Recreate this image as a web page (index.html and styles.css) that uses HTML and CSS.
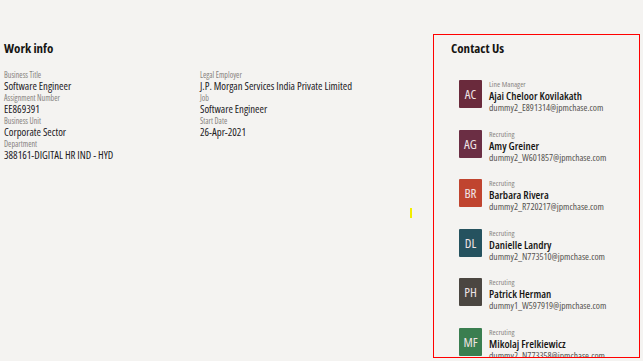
FILE: index.html
```html
<!DOCTYPE html>
<html lang="en">
<head>
<meta charset="utf-8">
<title>Work info</title>
<link rel="stylesheet" href="styles.css">
</head>
<body>
<main class="page">
  <section class="work">
    <h2 class="heading">Work info</h2>
    <div class="fields">
      <div class="col">
        <div class="field"><div class="label">Business Title</div><div class="value">Software Engineer</div></div>
        <div class="field"><div class="label">Assignment Number</div><div class="value">EE869391</div></div>
        <div class="field"><div class="label">Business Unit</div><div class="value">Corporate Sector</div></div>
        <div class="field"><div class="label">Department</div><div class="value">388161-DIGITAL HR IND - HYD</div></div>
      </div>
      <div class="col">
        <div class="field"><div class="label">Legal Employer</div><div class="value">J.P. Morgan Services India Private Limited</div></div>
        <div class="field"><div class="label">Job</div><div class="value">Software Engineer</div></div>
        <div class="field"><div class="label">Start Date</div><div class="value">26-Apr-2021</div></div>
      </div>
    </div>
  </section>
  <aside class="contact">
    <h2 class="heading">Contact Us</h2>
    <ul class="people">
      <li class="person"><span class="avatar av-ac">AC</span><div class="info"><div class="role">Line Manager</div><div class="name">Ajai Cheloor Kovilakath</div><div class="email">dummy2_E891314@jpmchase.com</div></div></li>
      <li class="person"><span class="avatar av-ag">AG</span><div class="info"><div class="role">Recruting</div><div class="name">Amy Greiner</div><div class="email">dummy2_W601857@jpmchase.com</div></div></li>
      <li class="person"><span class="avatar av-br">BR</span><div class="info"><div class="role">Recruting</div><div class="name">Barbara Rivera</div><div class="email">dummy2_R720217@jpmchase.com</div></div></li>
      <li class="person"><span class="avatar av-dl">DL</span><div class="info"><div class="role">Recruting</div><div class="name">Danielle Landry</div><div class="email">dummy2_N773510@jpmchase.com</div></div></li>
      <li class="person"><span class="avatar av-ph">PH</span><div class="info"><div class="role">Recruting</div><div class="name">Patrick Herman</div><div class="email">dummy1_W597919@jpmchase.com</div></div></li>
      <li class="person"><span class="avatar av-mf">MF</span><div class="info"><div class="role">Recruting</div><div class="name">Mikolaj Frelkiewicz</div><div class="email">dummy2_N773358@jpmchase.com</div></div></li>
    </ul>
  </aside>
  <span class="cursor"></span>
</main>
</body>
</html>
```
FILE: styles.css
```css
html, body {
  margin: 0;
  padding: 0;
  background: #f4f3f1;
}
body {
  font-family: "Open Sans", "Noto Sans", sans-serif;
  font-stretch: 75%;
  color: #161513;
}
.page {
  position: relative;
  display: flex;
  align-items: flex-start;
  width: 643px;
  height: 361px;
  overflow: hidden;
}
.heading {
  margin: 0;
  font-size: 13px;
  line-height: 16px;
  font-weight: 700;
  color: #161513;
}
.work {
  width: 429px;
  padding: 40px 0 0 4px;
}
.fields {
  display: grid;
  grid-template-columns: 196px auto;
  margin-top: 14px;
}
.field {
  display: flex;
  flex-direction: column;
}
.label {
  font-size: 8px;
  line-height: 10px;
  color: #85817d;
}
.value {
  font-size: 10.7px;
  line-height: 13px;
  color: #22201e;
}
.contact {
  box-sizing: border-box;
  width: 207px;
  height: 324px;
  margin-top: 34px;
  border: 1px solid #ff0000;
  padding: 5px 0 0 17px;
  overflow: hidden;
}
.people {
  list-style: none;
  margin: 23px 0 0 8px;
  padding: 0;
  display: flex;
  flex-direction: column;
  gap: 14.5px;
}
.person {
  display: flex;
  align-items: flex-start;
  gap: 7px;
}
.avatar {
  flex: none;
  width: 23px;
  height: 28px;
  margin-top: 1px;
  display: flex;
  align-items: center;
  justify-content: center;
  font-size: 13px;
  color: #f0e4e5;
  border-radius: 1px;
}
.av-ac { background: #6a2a3c; }
.av-ag { background: #6b2e44; }
.av-br { background: #c0442f; }
.av-dl { background: #25525f; }
.av-ph { background: #4b4641; }
.av-mf { background: #3a7e50; }
.info {
  display: flex;
  flex-direction: column;
}
.role {
  font-size: 7.8px;
  line-height: 11px;
  color: #8a8682;
}
.name {
  font-size: 11px;
  line-height: 12px;
  font-weight: 650;
  color: #161513;
}
.email {
  font-size: 9.5px;
  line-height: 12px;
  color: #55524f;
}
.cursor {
  position: absolute;
  left: 410px;
  top: 208px;
  width: 2px;
  height: 10px;
  background: #f2ee00;
}
```
